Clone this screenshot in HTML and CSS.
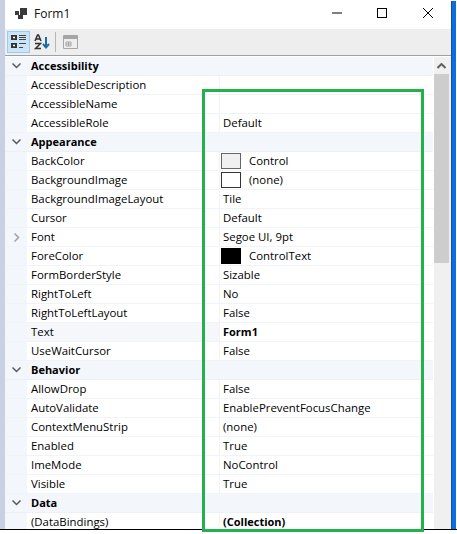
FILE: index.html
```html
<!DOCTYPE html>
<html lang="en">
<head>
<meta charset="utf-8">
<title>Form1</title>
<link rel="stylesheet" href="styles.css">
</head>
<body>
<div class="page">
  <div class="strip-left"></div>
  <div class="window">
    <header class="titlebar">
      <svg class="app-icon" width="12" height="11" viewBox="0 0 12 11"><path d="M5 0h7v7H5zM0 3h4v4H0zM3 7h5v4H3z" fill="#3a3a3a"/></svg>
      <span class="title">Form1</span>
      <svg class="win-btn min" width="10" height="2" viewBox="0 0 10 2"><path d="M0 1h10" stroke="#000" stroke-width="1"/></svg>
      <svg class="win-btn max" width="10" height="10" viewBox="0 0 10 10"><rect x=".5" y=".5" width="9" height="9" fill="none" stroke="#000"/></svg>
      <svg class="win-btn close" width="10" height="10" viewBox="0 0 10 10"><path d="M0 0l10 10M10 0L0 10" stroke="#000" stroke-width="1"/></svg>
    </header>
    <nav class="toolbar">
      <button class="tool active">
        <svg width="16" height="15" viewBox="0 0 16 15"><path d="M0 1h6v5H0zM0 9h6v5H0z" fill="#333"/><path d="M2 3.500h2M3 2.500v2M2 11.500h2M3 10.500v2" stroke="#fff"/><path d="M8 1.500h7M8 3.500h7M8 5.500h7M8 9.500h7M8 13.500h4" stroke="#444"/></svg>
      </button>
      <button class="tool narrow">
        <svg width="16" height="16" viewBox="0 0 16 16"><path d="M1 7l2.500-6h1L7 7M2 5h4M1 9.500h5.500L1.500 14.500H7" fill="none" stroke="#333" stroke-width="1.500"/><path d="M12 3v10M9 10l3 3.500 3-3.500" fill="none" stroke="#1a6fa8" stroke-width="2"/></svg>
      </button>
      <span class="tool-sep"></span>
      <span class="tool disabled">
        <svg width="15" height="14" viewBox="0 0 15 14"><path d="M.5 .500h14v13H.5z" fill="none" stroke="#a6a6a6"/><path d="M1 1h13v3H1z" fill="#a6a6a6"/><path d="M3 7h5v4H3z" fill="none" stroke="#a6a6a6"/><path d="M5.500 7v4M3 9h5" stroke="#a6a6a6"/></svg>
      </span>
    </nav>
    <div class="content">
      <div class="grid">
        <div class="row cat"><span class="gut"><svg class="chev" width="9" height="6" viewBox="0 0 9 6"><path d="M.5 .500L4.500 4.500 8.500 .500" fill="none" stroke="#5a5a5a" stroke-width="1.500"/></svg></span><span class="name">Accessibility</span></div>
        <div class="row"><span class="gut"></span><span class="name">AccessibleDescription</span><span class="val"></span></div>
        <div class="row"><span class="gut"></span><span class="name">AccessibleName</span><span class="val"></span></div>
        <div class="row"><span class="gut"></span><span class="name">AccessibleRole</span><span class="val">Default</span></div>
        <div class="row cat"><span class="gut"><svg class="chev" width="9" height="6" viewBox="0 0 9 6"><path d="M.5 .500L4.500 4.500 8.500 .500" fill="none" stroke="#5a5a5a" stroke-width="1.500"/></svg></span><span class="name">Appearance</span></div>
        <div class="row"><span class="gut"></span><span class="name">BackColor</span><span class="val swatched"><i class="swatch grey"></i>Control</span></div>
        <div class="row"><span class="gut"></span><span class="name">BackgroundImage</span><span class="val swatched"><i class="swatch"></i>(none)</span></div>
        <div class="row"><span class="gut"></span><span class="name">BackgroundImageLayout</span><span class="val">Tile</span></div>
        <div class="row"><span class="gut"></span><span class="name">Cursor</span><span class="val">Default</span></div>
        <div class="row"><span class="gut"><svg class="chev" width="6" height="9" viewBox="0 0 6 9"><path d="M.5 .500L4.500 4.500 .5 8.500" fill="none" stroke="#a0a0a0" stroke-width="1.500"/></svg></span><span class="name">Font</span><span class="val">Segoe UI, 9pt</span></div>
        <div class="row"><span class="gut"></span><span class="name">ForeColor</span><span class="val swatched"><i class="swatch black"></i>ControlText</span></div>
        <div class="row"><span class="gut"></span><span class="name">FormBorderStyle</span><span class="val">Sizable</span></div>
        <div class="row"><span class="gut"></span><span class="name">RightToLeft</span><span class="val">No</span></div>
        <div class="row"><span class="gut"></span><span class="name">RightToLeftLayout</span><span class="val">False</span></div>
        <div class="row current"><span class="gut"></span><span class="name">Text</span><span class="val bold">Form1</span></div>
        <div class="row"><span class="gut"></span><span class="name">UseWaitCursor</span><span class="val">False</span></div>
        <div class="row cat"><span class="gut"><svg class="chev" width="9" height="6" viewBox="0 0 9 6"><path d="M.5 .500L4.500 4.500 8.500 .500" fill="none" stroke="#5a5a5a" stroke-width="1.500"/></svg></span><span class="name">Behavior</span></div>
        <div class="row"><span class="gut"></span><span class="name">AllowDrop</span><span class="val">False</span></div>
        <div class="row"><span class="gut"></span><span class="name">AutoValidate</span><span class="val">EnablePreventFocusChange</span></div>
        <div class="row"><span class="gut"></span><span class="name">ContextMenuStrip</span><span class="val">(none)</span></div>
        <div class="row"><span class="gut"></span><span class="name">Enabled</span><span class="val">True</span></div>
        <div class="row"><span class="gut"></span><span class="name">ImeMode</span><span class="val">NoControl</span></div>
        <div class="row"><span class="gut"></span><span class="name">Visible</span><span class="val">True</span></div>
        <div class="row cat"><span class="gut"><svg class="chev" width="9" height="6" viewBox="0 0 9 6"><path d="M.5 .500L4.500 4.500 8.500 .500" fill="none" stroke="#5a5a5a" stroke-width="1.500"/></svg></span><span class="name">Data</span></div>
        <div class="row"><span class="gut"></span><span class="name">(DataBindings)</span><span class="val bold">(Collection)</span></div>
      </div>
      <div class="scrollbar">
        <div class="arrow"><svg width="9" height="6" viewBox="0 0 9 6"><path d="M.5 5L4.500 1 8.500 5" fill="none" stroke="#606060" stroke-width="2"/></svg></div>
        <div class="thumb"></div>
      </div>
    </div>
  </div>
  <div class="strip-right"></div>
</div>
<div class="highlight"></div>
</body>
</html>
```
FILE: styles.css
```css
* { box-sizing: border-box; }
html, body { margin: 0; padding: 0; background: #fff; }
body {
  position: relative;
  width: 457px;
  height: 534px;
  overflow: hidden;
  font-family: "Open Sans", "Liberation Sans", sans-serif;
  font-size: 11.4px;
  color: #000;
}
.page {
  display: flex;
  width: 457px;
  height: 530px;
  border-bottom: 1px solid #000;
}
.strip-left { width: 5px; background: #c7d1e2; }
.strip-right {
  width: 5px;
  margin-right: 1px;
  margin-top: 1px;
  background: #0a6fe0;
  border-left: 1px solid #1d4f91;
}
.window {
  width: 446px;
  display: flex;
  flex-direction: column;
  background: #fff;
}
.titlebar {
  height: 29px;
  display: flex;
  align-items: center;
  padding: 0 0 3px 10px;
  flex: none;
}
.title { font-size: 12px; margin-left: 7px; color: #111; flex: 1; }
.win-btn { flex: none; }
.min { margin-right: 35px; }
.max { margin-right: 36px; }
.close { margin-right: 18px; }
.toolbar {
  height: 27px;
  flex: none;
  display: flex;
  align-items: center;
  padding: 0 0 1px 2px;
  background: #eeeeee;
  border-bottom: 1px solid #a0a0a0;
}
.tool {
  width: 23px;
  height: 22px;
  padding: 0;
  margin: 0 2px 0 0;
  display: flex;
  align-items: center;
  justify-content: center;
  background: transparent;
  border: 1px solid transparent;
  border-radius: 0;
}
.tool.narrow { width: 19px; }
.tool.active { background: #cce4f7; border-color: #99ccf3; }
.tool-sep { width: 1px; height: 20px; background: #b5b5b5; margin: 0 3px 0 2px; }
.content {
  flex: 1;
  min-height: 0;
  display: flex;
  overflow: hidden;
  padding-top: 1px;
}
.grid { width: 428px; flex: none; }
.row {
  display: grid;
  grid-template-columns: 22px 192px 1fr;
  height: 19px;
  border-bottom: 1px solid #f0f3f8;
  line-height: 18px;
  white-space: nowrap;
}
.gut {
  background: #f3f6fb;
  display: flex;
  align-items: center;
  justify-content: center;
  padding-left: 1px;
}
.name { padding-left: 4px; }
.val { padding-left: 3px; border-left: 1px solid #f0f3f8; }
.cat { background: #f3f6fb; border-bottom-color: #edf0f5; }
.cat .name { font-weight: 700; font-size: 11px; grid-column: 2 / 4; }
.current .name { background: #f5f7fb; }
.bold { font-weight: 700; font-size: 11px; }
.swatched { display: flex; align-items: center; padding-left: 1px; }
.swatch {
  width: 20px;
  height: 16px;
  margin-right: 8px;
  border: 1px solid #333;
  background: #fff;
  flex: none;
}
.swatch.grey { background: #f0f0f0; border-color: #666; }
.swatch.black { background: #000; border-color: #000; }
.scrollbar {
  flex: 1;
  background: #f0f0f0;
  margin-left: 1px;
}
.arrow {
  height: 17px;
  width: 15px;
  display: flex;
  align-items: center;
  justify-content: center;
}
.thumb { width: 15px; height: 189px; background: #cdcdcd; }
.highlight {
  position: absolute;
  left: 202px;
  top: 89px;
  width: 222px;
  height: 443px;
  border: 3px solid #22b14c;
  pointer-events: none;
}
```
